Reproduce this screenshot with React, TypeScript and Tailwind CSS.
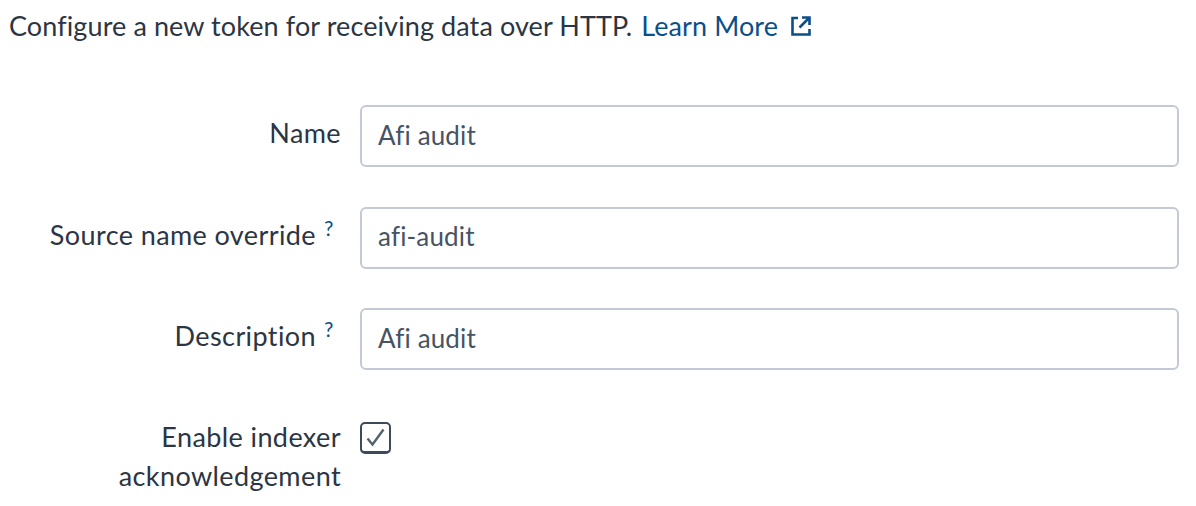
import React from "react";

const fields = [
  { label: "Name", value: "Afi audit", help: false },
  { label: "Source name override", value: "afi-audit", help: true },
  { label: "Description", value: "Afi audit", help: true },
];

const App: React.FC = () => {
  return (
    <div className="w-[1196px] h-[506px] overflow-hidden bg-white text-[#2b3543] text-[27px] leading-[38px] tracking-[0.4px] font-['Lato',sans-serif]">
      {/* Intro */}
      <div className="flex items-center pl-[9px] pt-[7px] h-[45px] tracking-[0.1px]">
        <span>Configure a new token for receiving data over HTTP.</span>
        <a href="#" className="ml-[9px] text-[#0b4f8a]">Learn More</a>
        <svg className="ml-[13px] mt-[-1px]" width="20" height="20" viewBox="0 0 20 20" fill="none" stroke="#0b4f8a" strokeWidth="2.6">
          <path d="M7 2H1.5v16.5h17V13" />
          <path d="M11 1.5h7.5V9M18.5 1.5 8.5 11.5" />
        </svg>
      </div>

      {/* Form rows */}
      <div className="flex flex-col gap-[39.5px] mt-[60px]">
        {fields.map((f) => (
          <div key={f.label} className="flex items-start h-[62px]">
            <label className="w-[341px] pt-[9px] flex justify-end items-start">
              <span>{f.label}</span>
              {f.help && <span className="ml-[8px] mr-[8px] w-[9px] text-[21px] leading-[24px] text-[#0b4f8a] tracking-normal">?</span>}
            </label>
            <input
              readOnly
              value={f.value}
              className="ml-[19px] w-[819px] h-[62px] pl-[16px] pb-[3px] rounded-[6px] border-2 border-[#c3cad6] text-[#465364] text-[26px] tracking-[0.15px] outline-none"
            />
          </div>
        ))}

        {/* Acknowledgement */}
        <div className="flex items-start mt-[7px]">
          <label className="w-[341px] text-right leading-[39px]">
            Enable indexer
            <br />
            acknowledgement
          </label>
          <span className="ml-[19px] mt-[5px] w-[31px] h-[32px] rounded-[5px] border-2 border-[#3c4a5c] border-b-[3px] flex items-center justify-center">
            <svg width="21" height="21" viewBox="0 0 21 21" fill="none" stroke="#55616f" strokeWidth="2.4">
              <path d="M2.5 11.5 7.5 17.5 18.5 2.5" />
            </svg>
          </span>
        </div>
      </div>
    </div>
  );
};

export default App;
